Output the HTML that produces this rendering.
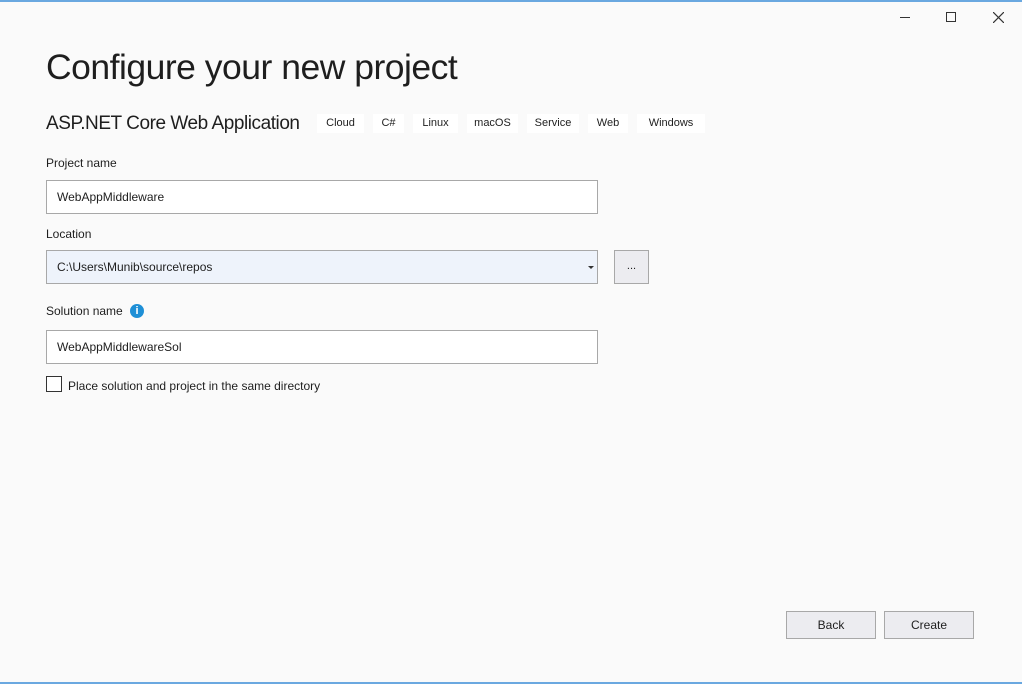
<!DOCTYPE html>
<html><head><style>
*{margin:0;padding:0;box-sizing:border-box}
body{width:1022px;height:684px;background:#fafafa;position:relative;overflow:hidden;font-family:"Liberation Sans",sans-serif;color:#1e1e1e}
.a{position:absolute}
.tag{position:absolute;top:114px;height:19px;background:#fff;font-size:11px;line-height:19px;text-align:center;color:#1e1e1e}
.lbl{position:absolute;left:46px;font-size:12px;color:#1e1e1e}
.inp{position:absolute;left:46px;width:552px;height:34px;border:1px solid #a8a8a8;background:#fff;font-size:12px;line-height:32px;padding-left:10px}
.btn{position:absolute;top:611px;width:90px;height:28px;border:1px solid #a8a8a8;background:#ececf0;font-size:12px;line-height:26px;text-align:center}
</style></head><body>
<div class="a" style="left:0;top:0;width:1022px;height:2px;background:#6aa8e0"></div>
<div class="a" style="left:0;top:682px;width:1022px;height:2px;background:#6aa8e0"></div>
<div class="a" style="left:900px;top:17px;width:10px;height:1px;background:#333"></div>
<div class="a" style="left:946px;top:12px;width:10px;height:10px;border:1px solid #333"></div>
<svg class="a" style="left:993px;top:12px" width="11" height="11"><path d="M0 0L11 11M11 0L0 11" stroke="#333" stroke-width="1.2"/></svg>
<div class="a" style="left:46px;top:47px;font-size:35.5px;letter-spacing:-0.5px;white-space:nowrap">Configure your new project</div>
<div class="a" style="left:46px;top:113px;font-size:19px;letter-spacing:-0.45px;white-space:nowrap">ASP.NET Core Web Application</div>
<div class="tag" style="left:317px;width:47px">Cloud</div>
<div class="tag" style="left:373px;width:31px">C#</div>
<div class="tag" style="left:413px;width:45px">Linux</div>
<div class="tag" style="left:467px;width:51px">macOS</div>
<div class="tag" style="left:527px;width:52px">Service</div>
<div class="tag" style="left:588px;width:40px">Web</div>
<div class="tag" style="left:637px;width:68px">Windows</div>
<div class="lbl" style="top:156px">Project name</div>
<div class="inp" style="top:180px">WebAppMiddleware</div>
<div class="lbl" style="top:227px">Location</div>
<div class="inp" style="top:250px;background:#eef3fb">C:\Users\Munib\source\repos</div>
<div class="a" style="left:588px;top:266px;width:0;height:0;border-left:3px solid transparent;border-right:3px solid transparent;border-top:3px solid #333"></div>
<div class="a" style="left:614px;top:250px;width:35px;height:34px;border:1px solid #a8a8a8;background:#ececf0;font-size:11px;text-align:center;line-height:30px">...</div>
<div class="lbl" style="top:304px">Solution name</div>
<div class="a" style="left:130px;top:304px;width:14px;height:14px;border-radius:50%;background:#1e8fd6;color:#fff;font-size:11px;font-weight:bold;text-align:center;line-height:14px">i</div>
<div class="inp" style="top:330px">WebAppMiddlewareSol</div>
<div class="a" style="left:46px;top:376px;width:16px;height:16px;border:1px solid #333;background:#fff"></div>
<div class="a" style="left:68px;top:379px;font-size:12px">Place solution and project in the same directory</div>
<div class="btn" style="left:786px">Back</div>
<div class="btn" style="left:884px">Create</div>
</body></html>
